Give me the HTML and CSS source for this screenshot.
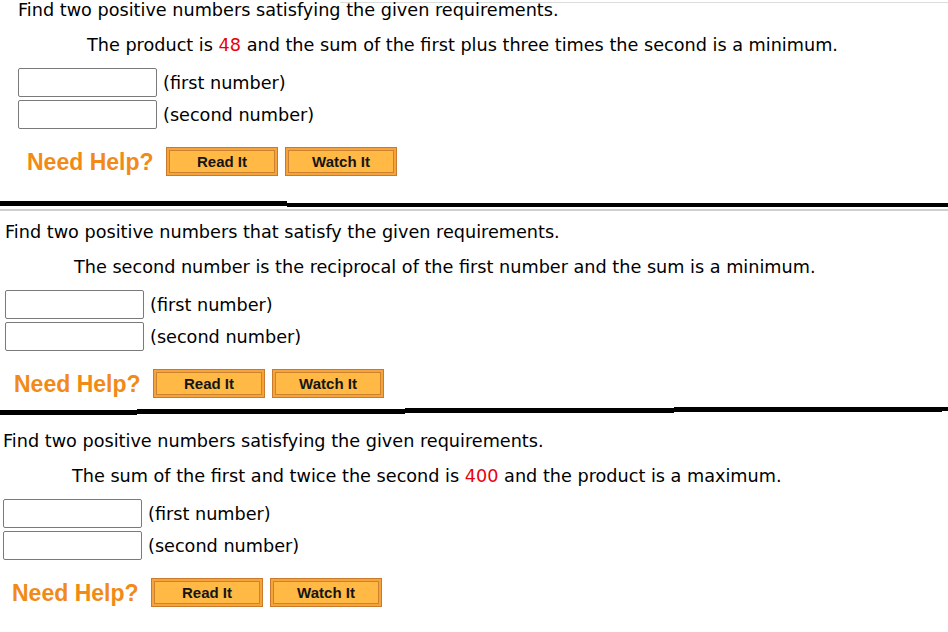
FILE: index.html
```html
<!DOCTYPE html>
<html>
<head>
<meta charset="utf-8">
<link rel="stylesheet" href="styles.css">
</head>
<body>
<div class="topline"></div>

<section class="q q1">
  <div class="q-title">Find two positive numbers satisfying the given requirements.</div>
  <div class="q-stmt">The product is <span class="red">48</span> and the sum of the first plus three times the second is a minimum.</div>
  <div class="answers">
    <div class="ans"><input class="box" type="text"><span class="lbl">(first number)</span></div>
    <div class="ans"><input class="box" type="text"><span class="lbl">(second number)</span></div>
  </div>
  <div class="help">
    <span class="need">Need Help?</span>
    <button class="btn">Read It</button>
    <button class="btn">Watch It</button>
  </div>
</section>

<div class="divider d1">
  <div class="seg s1a"></div>
  <div class="seg s1b"></div>
</div>
<div class="grayline"></div>

<section class="q q2">
  <div class="q-title">Find two positive numbers that satisfy the given requirements.</div>
  <div class="q-stmt">The second number is the reciprocal of the first number and the sum is a minimum.</div>
  <div class="answers">
    <div class="ans"><input class="box" type="text"><span class="lbl">(first number)</span></div>
    <div class="ans"><input class="box" type="text"><span class="lbl">(second number)</span></div>
  </div>
  <div class="help">
    <span class="need">Need Help?</span>
    <button class="btn">Read It</button>
    <button class="btn">Watch It</button>
  </div>
</section>

<div class="divider d2">
  <div class="seg s2a"></div>
  <div class="seg s2b"></div>
  <div class="seg s2c"></div>
  <div class="seg s2d"></div>
  <div class="seg s2e"></div>
</div>

<section class="q q3">
  <div class="q-title">Find two positive numbers satisfying the given requirements.</div>
  <div class="q-stmt">The sum of the first and twice the second is <span class="red">400</span> and the product is a maximum.</div>
  <div class="answers">
    <div class="ans"><input class="box" type="text"><span class="lbl">(first number)</span></div>
    <div class="ans"><input class="box" type="text"><span class="lbl">(second number)</span></div>
  </div>
  <div class="help">
    <span class="need">Need Help?</span>
    <button class="btn">Read It</button>
    <button class="btn">Watch It</button>
  </div>
</section>
</body>
</html>
```

FILE: styles.css
```css
html, body {
  margin: 0;
  padding: 0;
  background: #fff;
}
body {
  width: 948px;
  height: 632px;
  overflow: hidden;
  font-family: "DejaVu Sans", Verdana, sans-serif;
  font-size: 17.65px;
  line-height: 20px;
  color: #000;
}
.topline {
  height: 1px;
  background: #dcdcdc;
  margin: 2px 0 -3px 340px;
}
.q {
  display: flex;
  flex-direction: column;
}
.q1 { padding-left: 18px; margin-top: 0; }
.q2 { padding-left: 5px; margin-top: 11px; }
.q3 { padding-left: 3px; margin-top: 16px; }

.q-title { white-space: nowrap; }
.q-stmt {
  margin-top: 15px;
  padding-left: 69px;
  white-space: nowrap;
}
.red { color: #e8000b; }

.answers {
  margin-top: 13px;
  display: flex;
  flex-direction: column;
  gap: 3px;
}
.ans {
  display: flex;
  align-items: center;
  gap: 6px;
  height: 29px;
}
.box {
  box-sizing: border-box;
  width: 139px;
  height: 29px;
  margin: 0;
  border: 1px solid #7a7a7a;
  border-radius: 2px;
  background: #fff;
  padding: 0;
}
.lbl { white-space: nowrap; }

.help {
  margin-top: 18px;
  display: flex;
  align-items: center;
  height: 29px;
}
.need {
  font-family: "Liberation Sans", Arial, sans-serif;
  font-weight: bold;
  font-size: 23px;
  color: #f18a17;
  margin-left: 9px;
  width: 139px;
  white-space: nowrap;
}
.btn {
  box-sizing: border-box;
  width: 112px;
  height: 29px;
  margin: 0 7px 0 0;
  padding: 0;
  border: 1px solid #c97a2c;
  border-radius: 0;
  background: #ffb944;
  box-shadow: inset 0 0 0 2px #f6a43a, inset 0 0 0 3px #cd822f;
  font-family: "Liberation Sans", Arial, sans-serif;
  font-weight: bold;
  font-size: 15px;
  color: #151515;
  line-height: 27px;
}

.divider {
  display: flex;
  align-items: flex-start;
  width: 948px;
}
.seg { background: #000; }
.d1 { margin-top: 25px; height: 7px; }
.s1a { width: 287px; height: 5px; }
.s1b { flex: 1; height: 4px; margin-top: 2px; }
.grayline {
  height: 2px;
  background: #cfcfcf;
  margin-top: 1px;
}

.d2 { margin-top: 9px; height: 8px; }
.s2a { width: 137px; height: 5px; margin-top: 3px; }
.s2b { width: 268px; height: 5px; margin-top: 2px; }
.s2c { width: 269px; height: 5px; margin-top: 1px; }
.s2d { width: 268px; height: 5px; margin-top: 0; }
.s2e { flex: 1; height: 4px; margin-top: 0; }
```
